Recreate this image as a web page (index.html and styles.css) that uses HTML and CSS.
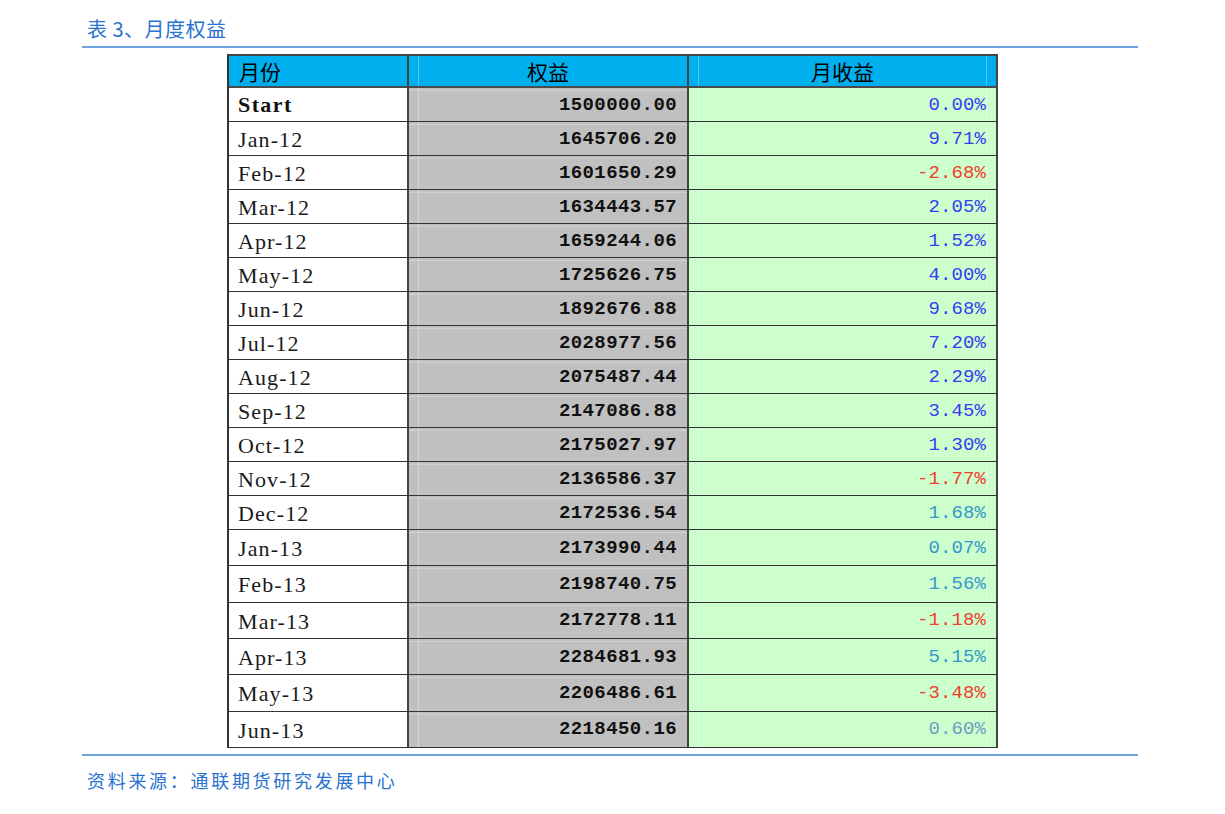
FILE: index.html
```html
<!DOCTYPE html>
<html lang="zh-CN">
<head>
<meta charset="utf-8">
<title>表 3、月度权益</title>
<link rel="stylesheet" href="styles.css">
</head>
<body>
<div class="page">
  <h1 class="title">表 3、月度权益</h1>
  <div class="table-wrap">
    <div class="grid">
      <div class="cell hd c1">月份</div>
      <div class="cell hd c2">权益</div>
      <div class="cell hd c3">月收益</div>

      <div class="cell m start">Start</div><div class="cell v">1500000.00</div><div class="cell p blue">0.00%</div>
      <div class="cell m">Jan-12</div><div class="cell v">1645706.20</div><div class="cell p blue">9.71%</div>
      <div class="cell m">Feb-12</div><div class="cell v">1601650.29</div><div class="cell p red">-2.68%</div>
      <div class="cell m">Mar-12</div><div class="cell v">1634443.57</div><div class="cell p blue">2.05%</div>
      <div class="cell m">Apr-12</div><div class="cell v">1659244.06</div><div class="cell p blue">1.52%</div>
      <div class="cell m">May-12</div><div class="cell v">1725626.75</div><div class="cell p blue">4.00%</div>
      <div class="cell m">Jun-12</div><div class="cell v">1892676.88</div><div class="cell p blue">9.68%</div>
      <div class="cell m">Jul-12</div><div class="cell v">2028977.56</div><div class="cell p blue">7.20%</div>
      <div class="cell m">Aug-12</div><div class="cell v">2075487.44</div><div class="cell p blue">2.29%</div>
      <div class="cell m">Sep-12</div><div class="cell v">2147086.88</div><div class="cell p blue">3.45%</div>
      <div class="cell m">Oct-12</div><div class="cell v">2175027.97</div><div class="cell p blue">1.30%</div>
      <div class="cell m">Nov-12</div><div class="cell v">2136586.37</div><div class="cell p red">-1.77%</div>
      <div class="cell m">Dec-12</div><div class="cell v">2172536.54</div><div class="cell p sky">1.68%</div>
      <div class="cell m">Jan-13</div><div class="cell v">2173990.44</div><div class="cell p sky">0.07%</div>
      <div class="cell m">Feb-13</div><div class="cell v">2198740.75</div><div class="cell p sky">1.56%</div>
      <div class="cell m">Mar-13</div><div class="cell v">2172778.11</div><div class="cell p red">-1.18%</div>
      <div class="cell m">Apr-13</div><div class="cell v">2284681.93</div><div class="cell p sky">5.15%</div>
      <div class="cell m">May-13</div><div class="cell v">2206486.61</div><div class="cell p red">-3.48%</div>
      <div class="cell m">Jun-13</div><div class="cell v">2218450.16</div><div class="cell p grey">0.60%</div>
    </div>
  </div>
  <p class="source">资料来源：通联期货研究发展中心</p>
</div>
</body>
</html>
```

FILE: styles.css
```css
html, body {
  margin: 0;
  padding: 0;
  background: #ffffff;
}

.page {
  margin-left: 82px;
  width: 1056px;
  padding-top: 17px;
}

.title {
  margin: 0;
  padding: 0 0 6px 5px;
  height: 23px;
  line-height: 23px;
  font-family: "Noto Sans CJK SC", sans-serif;
  font-weight: normal;
  font-size: 20px;
  color: #2a72cf;
  letter-spacing: 0.5px;
  border-bottom: 2px solid #6fa3de;
}

.table-wrap {
  padding-top: 6px;
  padding-left: 5px;
  display: flex;
  justify-content: center;
}

.grid {
  display: grid;
  grid-template-columns: 180px 280px 309px;
  grid-template-rows: 32px repeat(13, 34px) repeat(6, 36.33px);
  border-top: 2px solid #444;
  border-left: 2px solid #333;
}

.cell {
  box-sizing: border-box;
  border-right: 2px solid #444;
  border-bottom: 1px solid #333;
  display: flex;
  align-items: center;
  overflow: hidden;
  white-space: nowrap;
}

.hd {
  background: #00b0ee;
  font-family: "Noto Sans CJK SC", sans-serif;
  font-size: 21px;
  color: #000;
  border-bottom: 2px solid #4a4a4a;
}

.hd.c1 {
  padding-left: 10px;
}

.hd.c2 {
  justify-content: center;
  background:
    linear-gradient(to right, transparent 9px, #4cc6f0 9px, #4cc6f0 10px, transparent 10px),
    #00b0ee;
}

.hd.c3 {
  justify-content: center;
  background:
    linear-gradient(to right, transparent 9px, #4cc6f0 9px, #4cc6f0 10px, transparent 10px, transparent 297px, #4cc6f0 297px, #4cc6f0 298px, transparent 298px),
    #00b0ee;
}

.m {
  background: #ffffff;
  padding-left: 9px;
  padding-top: 3px;
  font-family: "Liberation Serif", serif;
  font-size: 22px;
  letter-spacing: 1.1px;
  color: #1a1a1a;
}

.m.start {
  font-weight: bold;
  padding-top: 0;
  letter-spacing: 1.4px;
  color: #111;
}

.v {
  justify-content: flex-end;
  padding-right: 10px;
  background:
    linear-gradient(to right, transparent 9px, #d6d6d6 9px, #d6d6d6 10px, transparent 10px),
    linear-gradient(to bottom, transparent 2px, #d0d0d0 2px, #d0d0d0 3px, transparent 3px),
    #c0c0c0;
  font-family: "Liberation Mono", monospace;
  font-weight: bold;
  font-size: 19px;
  letter-spacing: 0.4px;
  color: #111;
}

.p {
  justify-content: flex-end;
  padding-right: 10px;
  background:
    linear-gradient(to right, transparent 9px, #ddffdd 9px, #ddffdd 10px, transparent 10px, transparent 297px, #ddffdd 297px, #ddffdd 298px, transparent 298px),
    #ccffcc;
  font-family: "Liberation Mono", monospace;
  font-size: 19px;
  letter-spacing: 0.1px;
}

.blue { color: #3a3af5; }
.red { color: #f23c2e; }
.sky { color: #3399cc; }
.grey { color: #6d9dc6; }

.source {
  margin: 6px 0 0 0;
  padding: 12px 0 0 5px;
  border-top: 2px solid #6fa3de;
  font-family: "Noto Sans CJK SC", sans-serif;
  font-size: 18px;
  line-height: 24px;
  letter-spacing: 2.7px;
  color: #2a72cf;
}
```
